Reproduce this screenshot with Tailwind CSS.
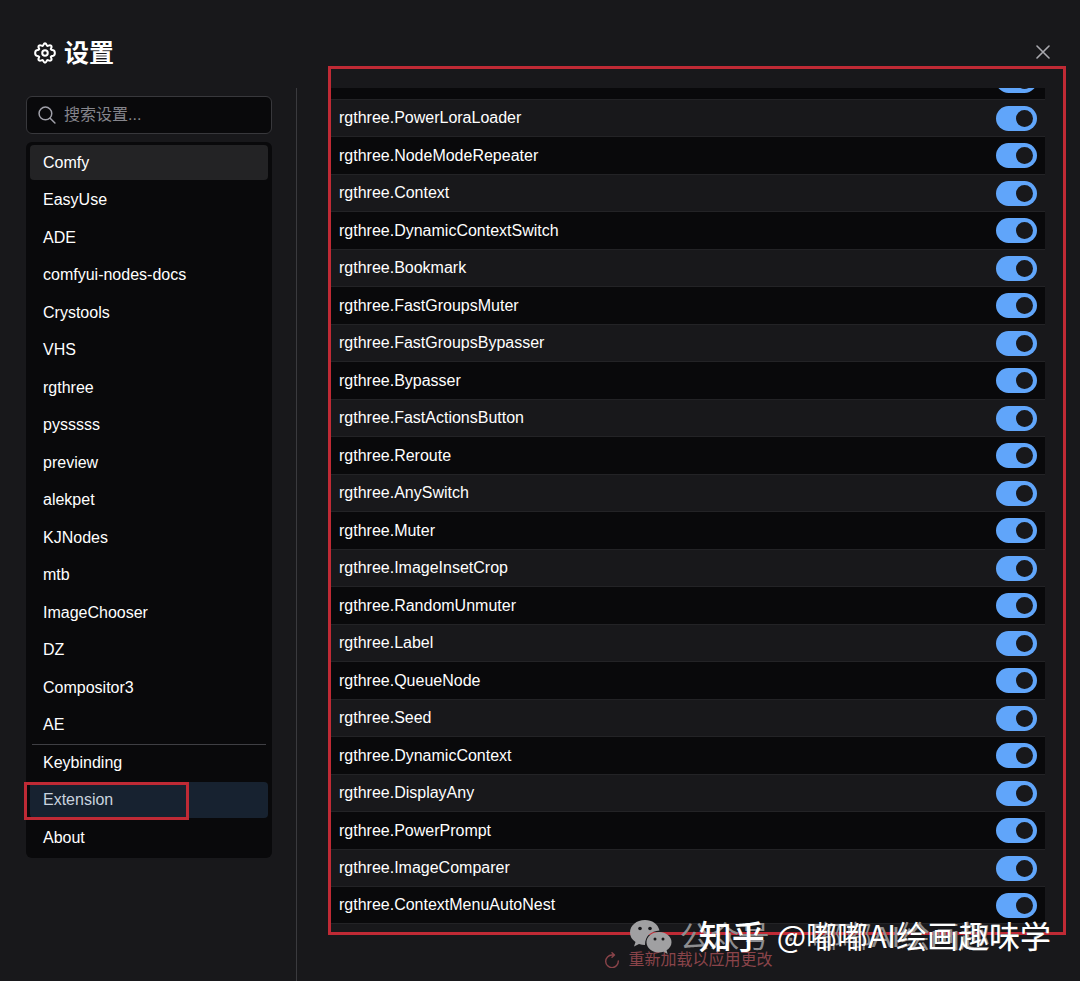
<!DOCTYPE html>
<html lang="zh-CN">
<head>
    <meta charset="UTF-8">
    <meta name="viewport" content="width=device-width, initial-scale=1.0">
    <title>设置</title>
    <script src="https://cdn.jsdelivr.net/npm/@tailwindcss/browser@4"></script>
</head>
<body class="relative flex flex-col h-screen overflow-hidden bg-[#18181b] text-white text-base font-['Liberation_Sans','Noto_Sans_CJK_SC',sans-serif]">
    <header class="flex items-end justify-between h-[66px] shrink-0 pl-[34px] pr-[30px]">
        <h1 class="flex items-center gap-2 h-[26px] text-[25px] leading-6 font-bold">
            <svg class="w-[22px] h-[22px]" viewBox="0 0 24 24" fill="none" stroke="currentColor" stroke-width="2.2" stroke-linejoin="round">
                <path d="M12 1.500c1.600 0 1.700 2.300 2.500 2.700.9.400 2.400-1.400 3.900-.400 1.700 1.400.3 3-.1 3.900.4 1 2.700 1.200 2.700 1.200 2.300.600 2.300 5.600 0 6.200 0 0-2.300.200-2.700 1.200.4.900 1.800 2.500.1 3.900-1.500 1-3-.8-3.900-.4-.8.400-.9 2.700-2.500 2.700s-1.700-2.300-2.500-2.700c-.9-.4-2.400 1.400-3.900.4-1.700-1.400-.3-3 .1-3.900-.4-1-2.700-1.200-2.700-1.200-2.300-.6-2.300-5.600 0-6.200 0 0 2.300-.2 2.700-1.200-.4-.9-1.800-2.500-.1-3.900 1.500-1 3 .8 3.900.4.800-.4.900-2.700 2.500-2.700z"/>
                <circle cx="12" cy="12" r="3"/>
            </svg>
            设置
        </h1>
        <button type="button" aria-label="关闭" class="mb-[7px] text-[#a9a9af]">
            <svg class="w-[14px] h-[14px]" viewBox="0 0 14 14" fill="none" stroke="currentColor" stroke-width="1.6" stroke-linecap="round">
                <path d="M1 1l12 12M13 1L1 13"/>
            </svg>
        </button>
    </header>

    <main class="flex flex-1 min-h-0">
        <!-- Category list -->
        <aside class="mt-[22px] w-[297px] shrink-0 border-r border-[#3a3a3e] pl-[26px] pr-6 pt-2">
            <label class="flex items-center gap-2 h-[38px] px-[11px] rounded-md border border-[#38383c] bg-[#09090b]">
                <svg class="w-[18px] h-[18px] shrink-0 text-[#a1a1aa]" viewBox="0 0 17 17" fill="none" stroke="currentColor" stroke-width="1.4" stroke-linecap="round">
                    <circle cx="7" cy="7" r="6"/>
                    <path d="M11.500 11.500l4.500 4.500"/>
                </svg>
                <input type="text" aria-label="搜索设置" placeholder="搜索设置..." class="w-full min-w-0 bg-transparent outline-none placeholder:text-[#85858c]">
            </label>
            <nav class="mt-2 rounded-md bg-[#09090b] py-[2px] px-1">
                <ul id="categories"></ul>
            </nav>
        </aside>

        <!-- Extension list -->
        <div class="flex flex-col flex-1 min-w-0">
            <section class="flex flex-col justify-end h-[869px] shrink-0 ml-[31px] mr-[14px] border-3 border-[#bf2a35] pr-[18px] pt-[19px] pb-2">
                <div class="flex flex-col justify-end flex-1 min-h-0 overflow-hidden">
                    <table class="w-full border-collapse">
                        <tbody id="extensions"></tbody>
                    </table>
                </div>
            </section>
            <button type="button" class="flex items-center gap-2 self-center mt-[13px] leading-6 text-[#8a444a]">
                <svg class="w-4 h-4" viewBox="0 0 16 16" fill="none" stroke="currentColor" stroke-width="1.4" stroke-linecap="round" stroke-linejoin="round">
                    <path d="M14.300 9A6.300 6.300 0 1 1 8 3h2.500M8 .700l2.500 2.300L8 5.300"/>
                </svg>
                重新加载以应用更改
            </button>
        </div>
    </main>

    <!-- Watermarks -->
    <div class="absolute right-[30px] bottom-[26px] flex items-center gap-4 text-[#8d8d8f] text-[30px] leading-9 whitespace-nowrap pointer-events-none">
        <span class="flex items-center gap-2">
            <svg class="w-[42px] h-[34px]" viewBox="0 0 42 34">
                <path fill="#a0a0a2" d="M15 0C6.500 0 0 5.500 0 12.500c0 4 2 7.200 5.500 9.500L4 26.500l5-2.500c2 .600 4 1 6 1C15 16 21 11 29.500 10.500 28 4 22 0 15 0z"/>
                <path fill="#a0a0a2" d="M29 12c-7 0-12.500 4.500-12.500 10.200S22 32.500 29 32.500c1.600 0 3.200-.300 4.600-.800l4 2.300-1-3.700c3-1.900 4.900-4.800 4.900-8.100C41.500 16.500 36 12 29 12z"/>
                <g fill="#18181b"><circle cx="10" cy="8.500" r="1.800"/><circle cx="20" cy="8.500" r="1.800"/><circle cx="25" cy="19" r="1.500"/><circle cx="33" cy="19" r="1.500"/></g>
            </svg>
            公众号
        </span>
        <span>·</span>
        <span>嘟嘟AI绘画趣味学</span>
    </div>
    <div class="absolute right-[29px] bottom-[28px] flex items-center gap-3 text-[31px] leading-9 whitespace-nowrap pointer-events-none font-['Noto_Sans_CJK_SC',sans-serif]">
        <span class="text-[33px] font-medium">知乎</span>
        <span>@嘟嘟AI绘画趣味学</span>
    </div>

    <script>
        const categories = ['Comfy', 'EasyUse', 'ADE', 'comfyui-nodes-docs', 'Crystools', 'VHS', 'rgthree', 'pysssss', 'preview', 'alekpet',
            'KJNodes', 'mtb', 'ImageChooser', 'DZ', 'Compositor3', 'AE', 'Keybinding', 'Extension', 'About'];
        const extensions = ['GroupActionsToggle', 'PowerLoraLoader', 'NodeModeRepeater', 'Context', 'DynamicContextSwitch', 'Bookmark',
            'FastGroupsMuter', 'FastGroupsBypasser', 'Bypasser', 'FastActionsButton', 'Reroute', 'AnySwitch', 'Muter', 'ImageInsetCrop',
            'RandomUnmuter', 'Label', 'QueueNode', 'Seed', 'DynamicContext', 'DisplayAny', 'PowerPrompt', 'ImageComparer', 'ContextMenuAutoNest'];

        // States of a category row
        const states = {
            Comfy: 'bg-[#232325]',
            Extension: 'bg-[#172230] text-[#c9d3df]',
        };

        document.getElementById('categories').innerHTML = categories.map((name) => `
            <li class="relative flex flex-col odd:h-[37px] even:h-[38px] py-px ${name === 'Keybinding' ? 'before:absolute before:top-0 before:inset-x-[2px] before:h-px before:bg-[#3f3f44]' : ''}">
                <a href="#${name}" class="flex items-center flex-1 rounded px-[13px] ${states[name] || ''}">${name}</a>
                ${name === 'Extension' ? '<span class="absolute -left-[6px] top-px -bottom-px w-[165px] border-3 border-[#bf2a35]"></span>' : ''}
            </li>`).join('');

        document.getElementById('extensions').innerHTML = extensions.map((name) => `
            <tr class="h-[37px] odd:not-last:h-[38px] odd:bg-[#09090b] even:bg-[#18181b] border-b border-[#232326]">
                <td class="p-0 pl-2"><label for="${name}">rgthree.${name}</label></td>
                <td class="p-0 pr-2">
                    <input type="checkbox" role="switch" id="${name}" checked
                           class="block ml-auto appearance-none w-[41px] h-[25px] rounded-full bg-[#60a5fa] before:block before:w-[17px] before:h-[17px] before:mt-1 before:ml-5 before:rounded-full before:bg-[#18181b]">
                </td>
            </tr>`).join('');
    </script>
</body>
</html>
